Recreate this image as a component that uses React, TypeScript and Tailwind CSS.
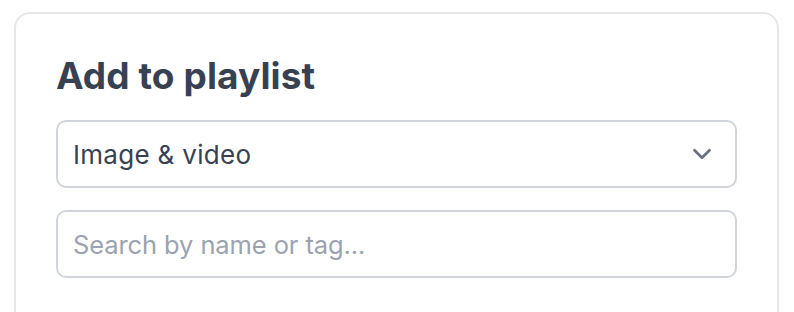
import { ChevronDown } from "lucide-react";

export default function App() {
  return (
    <div className="h-[312px] w-[794px] overflow-hidden bg-white pl-[14px] pr-[15px] pt-[12px] font-['Inter',sans-serif]">
      <div className="h-[320px] rounded-t-[16px] border-2 border-[#e5e7eb] bg-white px-[40px] pt-[40px]">
        <h2 className="text-[37px] font-bold leading-[44px] tracking-[0.1px] text-[#374151]">Add to playlist</h2>
        <div className="mt-[22px] flex flex-col gap-[22px]">
          <button className="flex h-[68px] w-full items-center justify-between rounded-[10px] border-2 border-[#d1d5db] bg-white pl-[15px] pr-[18px] text-left text-[26px] tracking-[0.3px] text-[#374151]">
            <span>Image &amp; video</span>
            <ChevronDown className="size-[30px] text-[#6b7280]" strokeWidth={2.2} />
          </button>
          <input
            placeholder="Search by name or tag..."
            className="h-[68px] w-full rounded-[10px] border-2 border-[#d1d5db] bg-white px-[15px] text-[25.5px] tracking-[-0.1px] text-[#374151] outline-none placeholder:text-[#9ca3af]"
          />
        </div>
      </div>
    </div>
  );
}
